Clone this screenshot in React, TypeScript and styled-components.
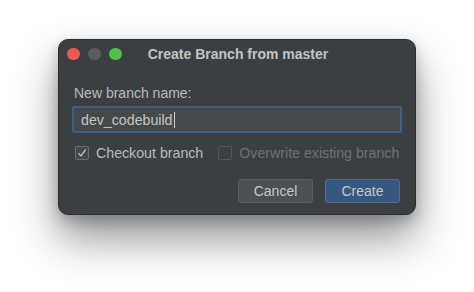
import styled, { createGlobalStyle } from 'styled-components';

const GlobalStyle = createGlobalStyle`
  html, body {
    margin: 0;
    padding: 0;
    background: #ffffff;
  }
  body {
    font-family: "Liberation Sans", Arial, sans-serif;
    -webkit-font-smoothing: antialiased;
  }
`;

const Stage = styled.div`
  width: 474px;
  height: 292px;
  padding: 39px 0 0 58px;
  box-sizing: border-box;
  overflow: hidden;
`;

const Window = styled.div`
  width: 358px;
  height: 176px;
  box-sizing: border-box;
  background: #3c3f41;
  border: 1px solid #2b2d2e;
  border-radius: 10px;
  box-shadow: 0 24px 44px rgba(0, 0, 0, 0.42), 0 6px 14px rgba(0, 0, 0, 0.22);
  display: flex;
  flex-direction: column;
`;

const TitleBar = styled.div`
  height: 28px;
  display: grid;
  grid-template-columns: 1fr auto 1fr;
  align-items: center;
  padding-left: 8px;
`;

const Lights = styled.div`
  display: flex;
  gap: 8.5px;
`;

const Light = styled.span<{ $color: string }>`
  width: 12.5px;
  height: 12.5px;
  border-radius: 50%;
  background: ${(p) => p.$color};
`;

const Title = styled.div`
  color: #c4c4c4;
  font-weight: bold;
  font-size: 14px;
  margin-right: 6px;
`;

const Body = styled.div`
  flex: 1;
  padding: 17px 13px 11px 13px;
  display: flex;
  flex-direction: column;
`;

const Label = styled.div`
  color: #bbbbbb;
  font-size: 14px;
  line-height: 16px;
  padding-left: 2px;
`;

const Input = styled.div`
  margin-top: 5px;
  height: 27px;
  box-sizing: border-box;
  border: 2px solid #3d6185;
  border-radius: 2px;
  background: #45494a;
  display: flex;
  align-items: center;
  padding-left: 7px;
  color: #c6c6c6;
  font-size: 14.2px;
`;

const Caret = styled.span`
  display: inline-block;
  width: 1px;
  height: 16px;
  background: #d0d0d0;
  margin-left: 1px;
`;

const OptionsRow = styled.div`
  margin-top: 11px;
  height: 18px;
  display: flex;
  align-items: center;
  padding-left: 3px;
  gap: 15px;
`;

const Option = styled.label<{ $disabled?: boolean }>`
  display: flex;
  align-items: center;
  gap: 7px;
  font-size: 14.2px;
  color: ${(p) => (p.$disabled ? '#6f7173' : '#bbbbbb')};
`;

const Box = styled.span<{ $disabled?: boolean }>`
  width: 14px;
  height: 14px;
  box-sizing: border-box;
  border: 1px solid ${(p) => (p.$disabled ? '#54575a' : '#6b6e70')};
  border-radius: 2px;
  background: ${(p) => (p.$disabled ? '#3c3f41' : '#43494a')};
  display: flex;
  align-items: center;
  justify-content: center;
`;

const Buttons = styled.div`
  margin-top: auto;
  display: flex;
  justify-content: flex-end;
  gap: 12px;
  padding-right: 2px;
`;

const Button = styled.button<{ $primary?: boolean }>`
  width: 75px;
  height: 24px;
  border-radius: 3px;
  font-family: inherit;
  font-size: 14px;
  color: #c8c8c8;
  border: 1px solid ${(p) => (p.$primary ? '#4c708c' : '#5a5d5f')};
  background: ${(p) => (p.$primary ? '#365880' : '#4c5052')};
  padding: 0;
`;

export default function App() {
  return (
    <>
      <GlobalStyle />
      <Stage>
        <Window>
          <TitleBar>
            <Lights>
              <Light $color="#ee5a52" />
              <Light $color="#5a5c5e" />
              <Light $color="#4fc145" />
            </Lights>
            <Title>Create Branch from master</Title>
            <span />
          </TitleBar>
          <Body>
            <Label>New branch name:</Label>
            <Input>
              dev_codebuild
              <Caret />
            </Input>
            <OptionsRow>
              <Option>
                <Box>
                  <svg width="10" height="10" viewBox="0 0 10 10">
                    <path d="M1.5 5.2 L4 8 L8.7 1.5" fill="none" stroke="#c0c0c0" strokeWidth="1.3" />
                  </svg>
                </Box>
                Checkout branch
              </Option>
              <Option $disabled>
                <Box $disabled />
                Overwrite existing branch
              </Option>
            </OptionsRow>
            <Buttons>
              <Button>Cancel</Button>
              <Button $primary>Create</Button>
            </Buttons>
          </Body>
        </Window>
      </Stage>
    </>
  );
}
